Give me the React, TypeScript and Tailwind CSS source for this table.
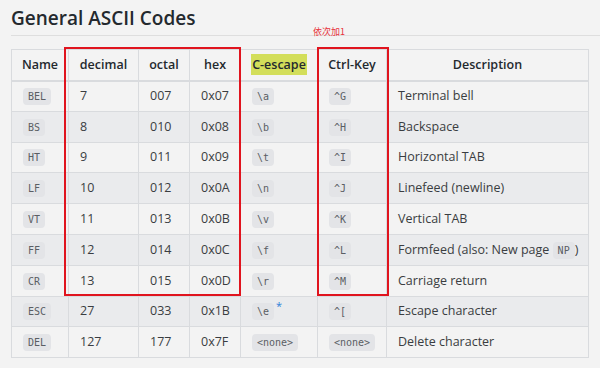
import React from "react";

type Row = {
  name: string;
  dec: string;
  oct: string;
  hex: string;
  esc: string;
  star?: boolean;
  ctrl: string;
  desc: React.ReactNode;
};

function Chip({ children }: { children: React.ReactNode }) {
  return (
    <code className="inline-block rounded-[4px] bg-[#e3e4e7] px-[5px] py-[3px] font-['DejaVu_Sans_Mono',monospace] text-[10px] leading-[11px] text-[#5a5e64]">
      {children}
    </code>
  );
}

const rows: Row[] = [
  { name: "BEL", dec: "7", oct: "007", hex: "0x07", esc: "\\a", ctrl: "^G", desc: "Terminal bell" },
  { name: "BS", dec: "8", oct: "010", hex: "0x08", esc: "\\b", ctrl: "^H", desc: "Backspace" },
  { name: "HT", dec: "9", oct: "011", hex: "0x09", esc: "\\t", ctrl: "^I", desc: "Horizontal TAB" },
  { name: "LF", dec: "10", oct: "012", hex: "0x0A", esc: "\\n", ctrl: "^J", desc: "Linefeed (newline)" },
  { name: "VT", dec: "11", oct: "013", hex: "0x0B", esc: "\\v", ctrl: "^K", desc: "Vertical TAB" },
  {
    name: "FF", dec: "12", oct: "014", hex: "0x0C", esc: "\\f", ctrl: "^L",
    desc: (
      <>
        Formfeed (also: New page <Chip>NP</Chip>)
      </>
    ),
  },
  { name: "CR", dec: "13", oct: "015", hex: "0x0D", esc: "\\r", ctrl: "^M", desc: "Carriage return" },
  { name: "ESC", dec: "27", oct: "033", hex: "0x1B", esc: "\\e", star: true, ctrl: "^[", desc: "Escape character" },
  { name: "DEL", dec: "127", oct: "177", hex: "0x7F", esc: "<none>", ctrl: "<none>", desc: "Delete character" },
];

export default function App() {
  const td = "h-[30.8px] whitespace-nowrap border border-[#d9dbde] px-[11px] py-0 align-middle";
  const th = "h-[31px] whitespace-nowrap border border-b-2 border-[#d9dbde] px-[6px] py-0 text-center font-semibold text-[#24292e]";
  return (
    <div className="relative h-[368px] w-[600px] overflow-hidden bg-[#f3f3f3] pl-[11px] font-['Open_Sans','Noto_Sans',sans-serif] text-[#3a3d41]">
      <h2 className="pt-[5px] text-[19px] font-semibold leading-[26px] text-[#24292e]">General ASCII Codes</h2>
      <div className="mt-[4px] h-px bg-[#dedede]" />

      {/* annotation */}
      <div className="absolute left-[313px] top-[26px] font-['Noto_Sans_CJK_SC',sans-serif] text-[9px] leading-[12px] text-[#e8303a]">
        依次加1
      </div>

      <table className="mt-[13px] w-[577px] table-fixed border-collapse text-[12.5px] leading-[18px]">
        <colgroup>
          <col className="w-[57px]" />
          <col className="w-[70px]" />
          <col className="w-[51px]" />
          <col className="w-[51px]" />
          <col className="w-[77px]" />
          <col className="w-[69px]" />
          <col className="w-[202px]" />
        </colgroup>
        <thead>
          <tr className="bg-[#f3f3f3]">
            <th className={th}>Name</th>
            <th className={th}>decimal</th>
            <th className={th}>octal</th>
            <th className={th}>hex</th>
            <th className={th}>
              <span className="bg-[#d3de5a] px-[1px] py-[2px]">C-escape</span>
            </th>
            <th className={th}>Ctrl-Key</th>
            <th className={th}>Description</th>
          </tr>
        </thead>
        <tbody>
          {rows.map((r, i) => (
            <tr key={r.name} className={i % 2 === 1 ? "bg-[#eaebed]" : "bg-[#f3f3f3]"}>
              <td className={td}><Chip>{r.name}</Chip></td>
              <td className={td}>{r.dec}</td>
              <td className={td}>{r.oct}</td>
              <td className={td}>{r.hex}</td>
              <td className={td}>
                <Chip>{r.esc}</Chip>
                {r.star && <sup className="ml-[2px] text-[11px] text-[#2f7fd8]">*</sup>}
              </td>
              <td className={td}><Chip>{r.ctrl}</Chip></td>
              <td className={td}>{r.desc}</td>
            </tr>
          ))}
        </tbody>
      </table>

      {/* red highlight boxes */}
      <div className="absolute left-[64px] top-[47px] h-[249px] w-[177px] border-2 border-[#e0141e]" />
      <div className="absolute left-[317px] top-[47px] h-[249px] w-[72px] border-2 border-[#e0141e]" />
    </div>
  );
}
